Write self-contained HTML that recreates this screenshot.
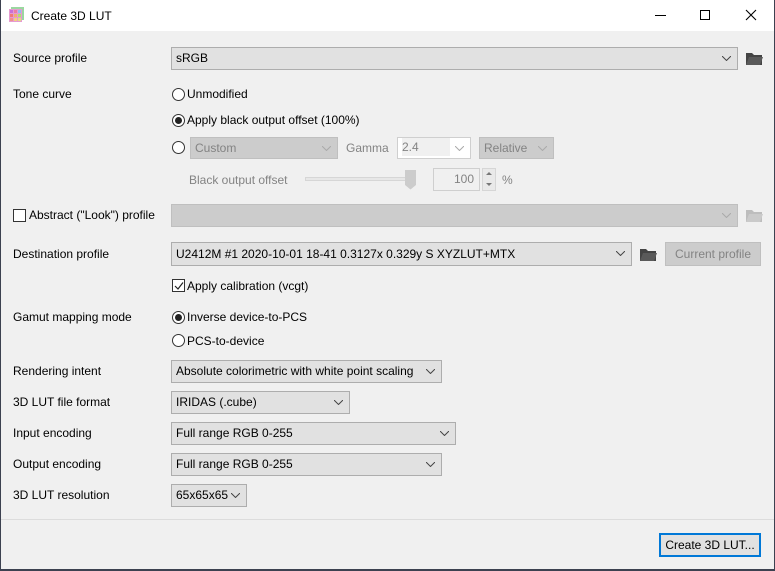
<!DOCTYPE html>
<html><head><meta charset="utf-8"><style>
*{box-sizing:border-box;margin:0;padding:0}
body{width:775px;height:571px;overflow:hidden;background:#f0f0f0;font-family:"Liberation Sans",sans-serif;font-size:12px;color:#000;position:relative}
.a{position:absolute;white-space:nowrap}
.t{position:absolute;white-space:nowrap;line-height:14px}
.cb{position:absolute;background:#e1e1e1;border:1px solid #adadad;padding-left:4px;line-height:21px;white-space:nowrap}
.cb.d{background:#cccccc;border-color:#bfbfbf;color:#838383}
.cb svg{position:absolute;right:6px;top:8px}
.rad{position:absolute;width:13px;height:13px;border:1px solid #333;border-radius:50%;background:#fff}
.rad.on:after{content:"";position:absolute;left:2px;top:2px;width:7px;height:7px;border-radius:50%;background:#222}
.chk{position:absolute;width:13px;height:13px;border:1px solid #333;background:#fff}
.g{color:#838383}
</style></head><body>
<div class="a" style="left:0;top:0;width:775px;height:31px;background:#fff"></div>
<div class="a" style="left:0;top:0;width:1px;height:571px;background:#3c4150"></div>
<div class="a" style="left:774px;top:0;width:1px;height:571px;background:#3c4150"></div>
<div class="a" style="left:0;top:569px;width:775px;height:2px;background:#3c4150"></div>
<svg class="a" style="left:8px;top:6px" width="18" height="18" viewBox="0 0 18 18">
<rect x="3" y="1" width="13" height="13" fill="#9bd7a0"/>
<rect x="1" y="3" width="13" height="13" fill="#e69bd0"/>
<rect x="2" y="4" width="3" height="3" fill="#c86fd8"/><rect x="6" y="4" width="3" height="3" fill="#e97ca8"/><rect x="10" y="4" width="3" height="3" fill="#8fc0f0"/>
<rect x="2" y="8" width="3" height="3" fill="#f07a7a"/><rect x="6" y="8" width="3" height="3" fill="#f0b070"/><rect x="10" y="8" width="3" height="3" fill="#b0e070"/>
<rect x="2" y="12" width="3" height="3" fill="#f09090"/><rect x="6" y="12" width="3" height="3" fill="#f0d080"/><rect x="10" y="12" width="3" height="3" fill="#e0e080"/>
</svg>
<div class="t" style="left:31px;top:9px">Create 3D LUT</div>
<div class="a" style="left:655px;top:15px;width:11px;height:1px;background:#000"></div>
<div class="a" style="left:700px;top:10px;width:10px;height:10px;border:1px solid #000"></div>
<svg class="a" style="left:745px;top:9px" width="12" height="12"><path d="M1 1L11 11M11 1L1 11" stroke="#000" stroke-width="1.1"/></svg>

<div class="t" style="left:13px;top:51px">Source profile</div>
<div class="cb" style="left:171px;top:47px;width:567px;height:23px">sRGB<svg width="9" height="5"><path d="M0 0L4.5 4.5L9 0" fill="none" stroke="#444"/></svg></div>
<svg class="a" style="left:746px;top:52px" width="17" height="13"><path d="M0 1h6l2 2h8v10H0z" fill="#444"/><path d="M3 5h14l-3 8H0z" fill="#5a5a5a"/></svg>

<div class="t" style="left:13px;top:87px">Tone curve</div>
<div class="rad" style="left:172px;top:88px"></div><div class="t" style="left:187px;top:87px">Unmodified</div>
<div class="rad on" style="left:172px;top:114px"></div><div class="t" style="left:187px;top:113px">Apply black output offset (100%)</div>
<div class="rad" style="left:172px;top:141px"></div>
<div class="cb d" style="left:190px;top:137px;width:148px;height:22px;line-height:20px">Custom<svg width="9" height="5"><path d="M0 0L4.5 4.5L9 0" fill="none" stroke="#aaa"/></svg></div>
<div class="t g" style="left:346px;top:141px">Gamma</div>
<div class="cb" style="left:397px;top:137px;width:74px;height:22px;line-height:18px;background:#fff;border-color:#cfcfcf;color:#838383"><span style="background:#f0f0f0;display:inline-block;width:48px">2.4</span><svg width="9" height="5"><path d="M0 0L4.5 4.5L9 0" fill="none" stroke="#aaa"/></svg></div>
<div class="cb d" style="left:479px;top:137px;width:75px;height:22px;line-height:20px">Relative<svg width="9" height="5"><path d="M0 0L4.5 4.5L9 0" fill="none" stroke="#aaa"/></svg></div>
<div class="t g" style="left:189px;top:173px">Black output offset</div>
<div class="a" style="left:305px;top:177px;width:110px;height:4px;background:#e7e7e7;border:1px solid #d6d6d6"></div>
<svg class="a" style="left:405px;top:170px" width="12" height="20"><path d="M0 0h11v15l-5.5 4.5L0 15z" fill="#cccccc"/></svg>
<div class="a" style="left:433px;top:168px;width:47px;height:23px;border:1px solid #cfcfcf;text-align:right;padding-right:5px;line-height:21px;color:#838383">100</div>
<div class="a" style="left:482px;top:168px;width:14px;height:23px;border:1px solid #d6d6d6;background:#e9e9e9"></div>
<div class="a" style="left:486px;top:172px;width:0;height:0;border:3px solid transparent;border-bottom-color:#777;border-top:0"></div>
<div class="a" style="left:486px;top:183px;width:0;height:0;border:3px solid transparent;border-top-color:#777;border-bottom:0"></div>
<div class="t g" style="left:502px;top:173px">%</div>

<div class="chk" style="left:13px;top:209px"></div><div class="t" style="left:29px;top:208px">Abstract ("Look") profile</div>
<div class="cb d" style="left:171px;top:204px;width:567px;height:23px"><svg width="9" height="5"><path d="M0 0L4.5 4.5L9 0" fill="none" stroke="#aaa"/></svg></div>
<svg class="a" style="left:746px;top:209px" width="17" height="13"><path d="M0 1h6l2 2h8v10H0z" fill="#bdbdbd"/><path d="M3 5h14l-3 8H0z" fill="#cacaca"/></svg>

<div class="t" style="left:13px;top:247px">Destination profile</div>
<div class="cb" style="left:171px;top:242px;width:461px;height:24px;line-height:22px">U2412M #1 2020-10-01 18-41 0.3127x 0.329y S XYZLUT+MTX<svg width="9" height="5"><path d="M0 0L4.5 4.5L9 0" fill="none" stroke="#444"/></svg></div>
<svg class="a" style="left:640px;top:248px" width="17" height="13"><path d="M0 1h6l2 2h8v10H0z" fill="#444"/><path d="M3 5h14l-3 8H0z" fill="#5a5a5a"/></svg>
<div class="a" style="left:665px;top:242px;width:96px;height:24px;background:#cccccc;border:1px solid #bfbfbf;color:#838383;text-align:center;line-height:22px">Current profile</div>
<div class="chk" style="left:172px;top:279px"><svg style="position:absolute;left:1px;top:1px" width="10" height="10"><path d="M1 5L4 8L9 1.5" fill="none" stroke="#222" stroke-width="1.2"/></svg></div>
<div class="t" style="left:187px;top:279px">Apply calibration (vcgt)</div>

<div class="t" style="left:13px;top:310px">Gamut mapping mode</div>
<div class="rad on" style="left:172px;top:311px"></div><div class="t" style="left:187px;top:310px">Inverse device-to-PCS</div>
<div class="rad" style="left:172px;top:334px"></div><div class="t" style="left:187px;top:334px">PCS-to-device</div>

<div class="t" style="left:13px;top:364px">Rendering intent</div>
<div class="cb" style="left:171px;top:360px;width:271px;height:23px">Absolute colorimetric with white point scaling<svg width="9" height="5"><path d="M0 0L4.5 4.5L9 0" fill="none" stroke="#444"/></svg></div>
<div class="t" style="left:13px;top:395px">3D LUT file format</div>
<div class="cb" style="left:171px;top:391px;width:179px;height:23px">IRIDAS (.cube)<svg width="9" height="5"><path d="M0 0L4.5 4.5L9 0" fill="none" stroke="#444"/></svg></div>
<div class="t" style="left:13px;top:426px">Input encoding</div>
<div class="cb" style="left:171px;top:422px;width:285px;height:23px">Full range RGB 0-255<svg width="9" height="5"><path d="M0 0L4.5 4.5L9 0" fill="none" stroke="#444"/></svg></div>
<div class="t" style="left:13px;top:457px">Output encoding</div>
<div class="cb" style="left:171px;top:453px;width:271px;height:23px">Full range RGB 0-255<svg width="9" height="5"><path d="M0 0L4.5 4.5L9 0" fill="none" stroke="#444"/></svg></div>
<div class="t" style="left:13px;top:488px">3D LUT resolution</div>
<div class="cb" style="left:171px;top:484px;width:76px;height:23px">65x65x65<svg width="9" height="5"><path d="M0 0L4.5 4.5L9 0" fill="none" stroke="#444"/></svg></div>

<div class="a" style="left:1px;top:519px;width:773px;height:1px;background:#dcdcdc"></div>
<div class="a" style="left:659px;top:533px;width:102px;height:24px;background:#e1e1e1;border:2px solid #0078d7;text-align:center;line-height:20px">Create 3D LUT...</div>
</body></html>
